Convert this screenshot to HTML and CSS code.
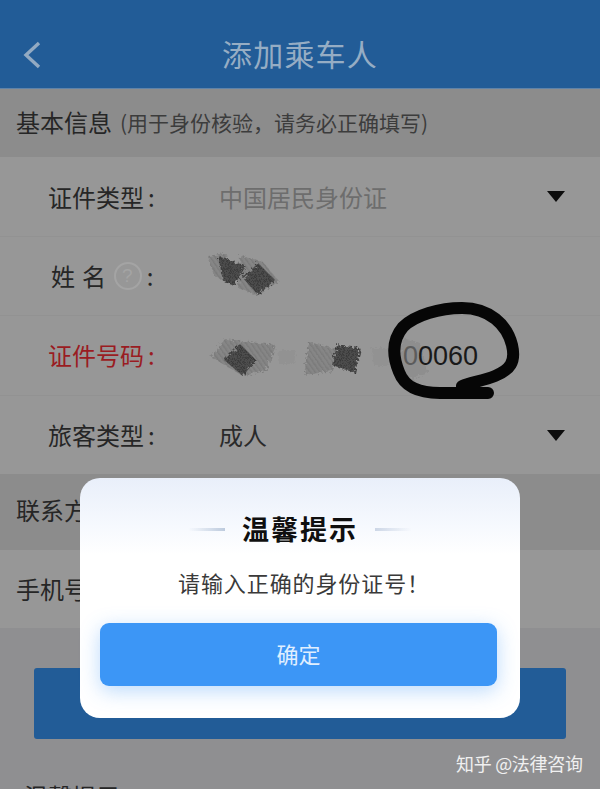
FILE: index.html
```html
<!DOCTYPE html>
<html lang="zh-CN">
<head>
<meta charset="utf-8">
<title>添加乘车人</title>
<link rel="stylesheet" href="styles.css">
</head>
<body>
<div class="page">
  <header class="topbar">
    <svg class="back" viewBox="0 0 20 30" aria-hidden="true"><path d="M17 3 L4 15 L17 27"/></svg>
    <h1 class="title">添加乘车人</h1>
  </header>

  <section class="section-head basic"><span class="section-name">基本信息</span><span class="section-note">(用于身份核验&#xFF0C;请务必正确填写)</span></section>

  <div class="row first">
    <span class="label">证件类型<span class="colon">:</span></span>
    <span class="value muted">中国居民身份证</span>
    <span class="caret"></span>
  </div>
  <div class="row">
    <span class="label name-label">姓 名<span class="help">?</span>:</span>
  </div>
  <div class="row">
    <span class="label required">证件号码<span class="colon">:</span></span>
    <span class="id-tail"><span class="id-first">0</span>0060</span>
  </div>
  <div class="row last">
    <span class="label">旅客类型<span class="colon">:</span></span>
    <span class="value">成人</span>
    <span class="caret"></span>
  </div>

  <section class="section-head contact"><span class="section-name">联系方式</span></section>
  <div class="row phone">
    <span class="label phone-label">手机号码:</span>
  </div>

  <div class="submit"></div>
  <p class="tips">温馨提示</p>

  <svg class="scribbles" viewBox="0 0 600 789" aria-hidden="true">
    <defs>
      <filter id="rough" x="-20%" y="-20%" width="140%" height="140%">
        <feTurbulence type="fractalNoise" baseFrequency="0.4" numOctaves="2" seed="4"/>
        <feDisplacementMap in="SourceGraphic" scale="7"/>
        <feGaussianBlur stdDeviation="0.6"/>
      </filter>
      <pattern id="hatch-a" width="3" height="3" patternUnits="userSpaceOnUse" patternTransform="rotate(28)">
        <rect width="3" height="3" fill="#4f4f4f"/>
        <rect width="1.2" height="3" fill="#383838"/>
      </pattern>
      <pattern id="hatch-b" width="4" height="4" patternUnits="userSpaceOnUse" patternTransform="rotate(-35)">
        <rect width="4" height="4" fill="#868686"/>
        <rect width="1.4" height="4" fill="#7a7a7a"/>
      </pattern>
    </defs>
    <g filter="url(#rough)">
      <polygon fill="url(#hatch-b)" points="208,256 226,253 231,284 214,276"/>
      <polygon fill="url(#hatch-b)" points="240,256 262,261 279,281 258,296 238,288"/>
      <polygon fill="url(#hatch-a)" points="218,256 246,266 234,286 223,281"/>
      <polygon fill="url(#hatch-a)" points="258,263 275,280 258,295 243,278"/>
      <polygon fill="url(#hatch-b)" points="225,339 276,345 266,371 243,376 211,357"/>
      <polygon fill="url(#hatch-a)" points="240,344 256,360 243,376 224,360"/>
      <polygon fill="#929292" points="277,350 296,350 294,364 279,364"/>
      <polygon fill="url(#hatch-b)" points="309,342 337,349 333,371 304,375"/>
      <polygon fill="url(#hatch-a)" points="337,345 361,348 355,373 332,365"/>
      <polygon fill="#8e8e8e" points="403,338 420,343 428,373 410,380 397,370"/>
      <polygon fill="#929292" points="372,348 392,348 390,366 374,366"/>
    </g>
    <path class="ring" d="M488 393 L440 393 C420 393 405 388 399 372 C392 355 392 340 403 327 C415 315 440 308 462 308 C490 308 507 325 512 345 C516 362 510 370 495 376 C485 380 470 383 462 386"/>
  </svg>

  <div class="dialog">
    <div class="dialog-head">
      <span class="rule rule-left"></span>
      <h2 class="dialog-title">温馨提示</h2>
      <span class="rule rule-right"></span>
    </div>
    <p class="dialog-msg">请输入正确的身份证号&#xFF01;</p>
    <button class="dialog-btn" type="button">确定</button>
  </div>

  <div class="watermark">知乎 @法律咨询</div>
</div>
</body>
</html>
```
FILE: styles.css
```css
* { box-sizing: border-box; }
html, body { margin: 0; padding: 0; }
body { background: #8f8f91; }
.page {
  position: relative;
  width: 600px;
  height: 789px;
  overflow: hidden;
  background: #8f8f91;
  font-family: "Noto Sans CJK SC", "Liberation Sans", sans-serif;
  color: #222;
}
.topbar {
  height: 89px;
  background: #225c97;
  display: flex;
  align-items: center;
  justify-content: center;
  padding-top: 18px;
  border-bottom: 1px solid #5f83a9;
  position: relative;
}
.title {
  margin: 0;
  font-size: 30px;
  font-weight: 400;
  letter-spacing: 1.2px;
  line-height: 36px;
  color: #96adc4;
}
.back {
  position: absolute;
  left: 22px;
  top: 40px;
  width: 20px;
  height: 30px;
  fill: none;
  stroke: #93aac2;
  stroke-width: 3.4;
}
.section-head {
  background: #8c8c8c;
  display: flex;
  align-items: center;
  padding-left: 16px;
}
.section-head.basic { height: 68px; padding-bottom: 2px; }
.section-head.contact { height: 76px; padding-bottom: 4px; }
.section-name { font-size: 24px; line-height: 32px; color: #262626; }
.section-note { font-size: 21px; line-height: 32px; color: #3c3c3c; margin-left: 8px; }
.row {
  height: 79.5px;
  background: #979797;
  border-bottom: 1px solid #929292;
  display: flex;
  align-items: center;
  padding-left: 48px;
  position: relative;
}
.row.first { padding-top: 2px; }
.row.last { border-bottom: 0; height: 78px; }
.row.phone { height: 78px; border-bottom: 0; padding-left: 16px; }
.label {
  width: 171px;
  flex: none;
  font-size: 24px;
  line-height: 32px;
  color: #262626;
}
.colon { margin-left: 4px; }
.label.required { color: #9a1c22; }
.name-label {
  display: flex;
  align-items: center;
  padding-left: 3px;
  letter-spacing: 0.8px;
}
.help {
  width: 28px;
  height: 28px;
  margin: 0 5px 0 7px;
  border: 2px solid #a4a4a4;
  border-radius: 50%;
  font-family: "Liberation Sans", sans-serif;
  font-size: 19px;
  line-height: 24px;
  text-align: center;
  color: #a4a4a4;
}
.value { font-size: 24px; line-height: 32px; color: #2a2a2a; }
.value.muted { color: #6d6d6d; }
.caret {
  position: absolute;
  left: 547px;
  top: 50%;
  margin-top: -5px;
  width: 0;
  height: 0;
  border-left: 9px solid transparent;
  border-right: 9px solid transparent;
  border-top: 11px solid #0d0d0d;
}
.id-tail {
  position: relative;
  z-index: 1;
  top: 1px;
  margin-left: 184px;
  font-family: "Liberation Sans", sans-serif;
  font-size: 27px;
  line-height: 32px;
  color: #1a1a1a;
}
.id-first { color: #5c5c5c; }
.submit {
  height: 71px;
  margin: 40px 34px 0;
  background: #225c97;
  border-radius: 3px;
}
.tips {
  margin: 41px 0 0 24px;
  font-size: 24px;
  line-height: 32px;
  color: #262626;
}
.scribbles {
  position: absolute;
  left: 0;
  top: 0;
  width: 600px;
  height: 789px;
  pointer-events: none;
}
.ring {
  fill: none;
  stroke: #060606;
  stroke-width: 12;
  stroke-linecap: round;
  stroke-linejoin: round;
}
.dialog {
  position: absolute;
  z-index: 2;
  left: 80px;
  top: 478px;
  width: 440px;
  height: 240px;
  border-radius: 20px;
  background: linear-gradient(180deg, #e9effa 0%, #f6f9fe 20%, #ffffff 32%);
  display: flex;
  flex-direction: column;
  align-items: center;
}
.dialog-head {
  margin-top: 33px;
  height: 36px;
  display: flex;
  align-items: center;
  justify-content: center;
}
.dialog-title {
  margin: 0 17px;
  font-size: 27px;
  line-height: 36px;
  font-weight: 700;
  letter-spacing: 2px;
  color: #0f0f0f;
}
.rule { width: 36px; height: 3px; filter: blur(0.5px); }
.rule-left { background: linear-gradient(90deg, rgba(190,203,222,0), #bccadd); }
.rule-right { background: linear-gradient(90deg, #ccd6e6, rgba(190,203,222,0)); }
.dialog-msg {
  margin: 20px 0 0;
  padding-left: 8px;
  font-size: 22px;
  line-height: 30px;
  letter-spacing: 0.9px;
  color: #3a3a3a;
}
.dialog-btn {
  margin-top: 26px;
  margin-right: 3px;
  width: 397px;
  height: 63px;
  padding-bottom: 4px;
  border: 0;
  border-radius: 9px;
  background: #3c96f6;
  box-shadow: 0 5px 20px rgba(60, 150, 246, 0.35);
  font-family: inherit;
  font-size: 22px;
  color: #e0efff;
}
.watermark {
  position: absolute;
  z-index: 3;
  left: 456px;
  top: 750px;
  font-size: 18px;
  line-height: 26px;
  letter-spacing: -0.3px;
  white-space: nowrap;
  color: #f0f0f0;
}
```
